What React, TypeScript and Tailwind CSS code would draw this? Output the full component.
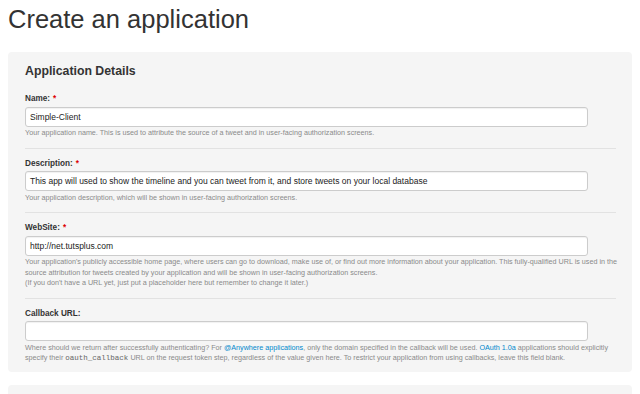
const fieldInput =
  'h-[20px] w-[563px] rounded-[3px] border border-[#cccccc] bg-white px-[4px] text-[8.5px] leading-[18px] text-[#222] shadow-[inset_0_1px_1px_rgba(0,0,0,0.06)]';

function Label({ text, required }: { text: string; required?: boolean }) {
  return (
    <div className="mb-[3.5px] text-[8.2px] font-bold leading-[8px] text-[#333]">
      {text}
      {required && <span className="ml-[3px] text-[#dd0000]">*</span>}
    </div>
  );
}

function Help({ children }: { children: React.ReactNode }) {
  return (
    <p className="mt-[1.5px] whitespace-nowrap text-[7.2px] leading-[10.5px] text-[#8a8a8a]">
      {children}
    </p>
  );
}

function Divider() {
  return <div className="mb-[11px] mt-[9px] h-px w-full bg-[#e2e2e2]" />;
}

export default function App() {
  return (
    <div className="h-[394px] overflow-hidden bg-white px-2 pt-[7px] font-['Liberation_Sans',Arial,sans-serif]">
      <h1 className="text-[25.5px] font-normal leading-[25px] text-[#333]">Create an application</h1>

      <div className="mt-[20px] rounded-[4px] bg-[#f5f5f5] pb-[8px] pl-[17px] pr-[16px] pt-[13px]">
        <h2 className="mb-[17px] text-[12.3px] font-bold leading-[13px] text-[#333]">Application Details</h2>

        <Label text="Name:" required />
        <div className={fieldInput}>Simple-Client</div>
        <Help>
          Your application name. This is used to attribute the source of a tweet and in user-facing authorization screens.
        </Help>

        <Divider />

        <Label text="Description:" required />
        <div className={fieldInput}>
          This app will used to show the timeline and you can tweet from it, and store tweets on your local database
        </div>
        <Help>Your application description, which will be shown in user-facing authorization screens.</Help>

        <Divider />

        <Label text="WebSite:" required />
        <div className={fieldInput}>http://net.tutsplus.com</div>
        <Help>
          Your application's publicly accessible home page, where users can go to download, make use of, or find out more
          information about your application. This fully-qualified URL is used in the
          <br />
          source attribution for tweets created by your application and will be shown in user-facing authorization screens.
          <br />
          (If you don't have a URL yet, just put a placeholder here but remember to change it later.)
        </Help>

        <Divider />

        <Label text="Callback URL:" />
        <div className={fieldInput}></div>
        <Help>
          Where should we return after successfully authenticating? For{' '}
          <span className="text-[#0088cc]">@Anywhere applications</span>, only the domain specified in the callback will
          be used. <span className="text-[#0088cc]">OAuth 1.0a</span> applications should explicitly
          <br />
          specify their <code className="font-['Liberation_Mono',monospace] text-[7.5px] text-[#666]">oauth_callback</code>{' '}
          URL on the request token step, regardless of the value given here. To restrict your application from using
          callbacks, leave this field blank.
        </Help>
      </div>

      <div className="mt-[13px] h-[20px] rounded-[4px] bg-[#f5f5f5]" />
    </div>
  );
}
